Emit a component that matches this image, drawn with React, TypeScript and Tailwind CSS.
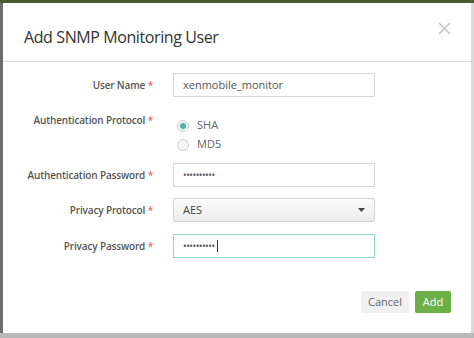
const font = { fontFamily: '"Open Sans", "Noto Sans", sans-serif' };

function Label({ text }: { text: string }) {
  return (
    <div className="w-[150px] shrink-0 text-right text-[10px] font-semibold tracking-[-0.15px] text-[#555]">
      {text} <span className="text-[#e06c6c]">*</span>
    </div>
  );
}

function Radio({ label, checked }: { label: string; checked?: boolean }) {
  return (
    <div className="flex h-[19px] items-center">
      <span className="ml-[4px] flex h-[12px] w-[12px] items-center justify-center rounded-full border border-[#cfcfcf] bg-[#f4f4f4]">
        {checked && <span className="h-[6px] w-[6px] rounded-full bg-[#4fb3a3]" />}
      </span>
      <span className="ml-[8px] text-[11px] text-[#666]">{label}</span>
    </div>
  );
}

export default function App() {
  return (
    <div className="h-[338px] w-[474px] overflow-hidden bg-[#b9b9b9]" style={font}>
      <div className="h-[3px] bg-[#4d5a2e]" />
      <div className="flex h-[330px]">
        <div className="w-[3px] bg-[#6e6e6e]" />
        <div className="flex w-[468px] flex-col bg-white">
          <div className="flex h-[59px] items-start justify-between border-b border-[#dcdcdc] pl-[21px] pr-[20px]">
            <h1 className="mt-[22px] text-[16px] tracking-[-0.4px] text-[#333]">Add SNMP Monitoring User</h1>
            <svg className="mt-[19px]" width="13" height="13" viewBox="0 0 13 13">
              <path d="M1 1L12 12M12 1L1 12" stroke="#c4c4c4" strokeWidth="1.6" />
            </svg>
          </div>

          <div className="mt-[11px] flex h-[24px] items-center">
            <Label text="User Name" />
            <div className="ml-[20px] flex h-[24px] w-[202px] items-center border border-[#d6d6d6] px-[9px] text-[11px] text-[#555]">
              xenmobile_monitor
            </div>
          </div>

          <div className="mt-[16px] flex h-[44px] items-start">
            <div className="leading-[14px]">
              <Label text="Authentication Protocol" />
            </div>
            <div className="ml-[20px] pt-[3px]">
              <Radio label="SHA" checked />
              <Radio label="MD5" />
            </div>
          </div>

          <div className="mt-[6px] flex h-[24px] items-center">
            <Label text="Authentication Password" />
            <div className="ml-[20px] flex h-[24px] w-[202px] items-center border border-[#d6d6d6] px-[9px] text-[10px] tracking-[-0.6px] text-[#555]">
              ••••••••••
            </div>
          </div>

          <div className="mt-[11px] flex h-[24px] items-center">
            <Label text="Privacy Protocol" />
            <div className="ml-[20px] flex h-[24px] w-[202px] items-center justify-between rounded-[2px] border border-[#d3d3d3] bg-gradient-to-b from-[#fbfbfb] to-[#ededed] px-[9px] text-[11px] text-[#444]">
              <span>AES</span>
              <svg width="7" height="4" viewBox="0 0 7 4">
                <path d="M0 0H7L3.5 4Z" fill="#444" />
              </svg>
            </div>
          </div>

          <div className="mt-[12px] flex h-[24px] items-center">
            <Label text="Privacy Password" />
            <div className="ml-[20px] flex h-[24px] w-[202px] items-center border border-[#8fd9c9] px-[9px] text-[10px] tracking-[-0.6px] text-[#555]">
              ••••••••••
              <span className="ml-[2px] h-[12px] w-px bg-[#333]" />
            </div>
          </div>

          <div className="mt-[33px] flex justify-end gap-[6px] pr-[20px]">
            <button className="h-[22px] w-[48px] rounded-[2px] bg-[#f0f0f0] text-[11px] text-[#666]">Cancel</button>
            <button className="h-[22px] w-[36px] rounded-[2px] bg-[#6db046] text-[11px] text-white">Add</button>
          </div>
        </div>
        <div className="w-[3px] bg-[#d9d9d9]" />
      </div>
    </div>
  );
}
